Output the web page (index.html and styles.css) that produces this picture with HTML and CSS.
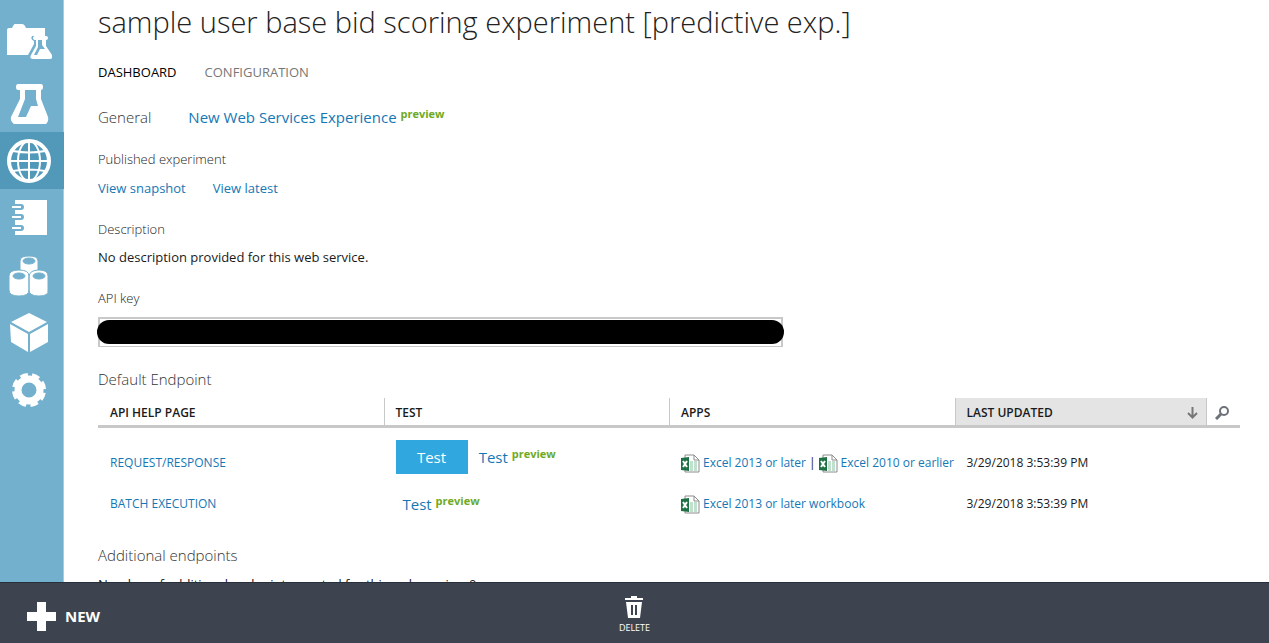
FILE: index.html
```
<!DOCTYPE html>
<html lang="en">
<head>
    <meta charset="UTF-8">
    <meta name="viewport" content="width=device-width, initial-scale=1.0">
    <title>Web Service Dashboard</title>
    <link rel="stylesheet" href="styles.css">
</head>
<body>

<!-- Excel icon, reused in the apps column -->
<svg class="symbols" aria-hidden="true">
    <symbol id="excel" viewBox="0 0 19 19">
        <path d="M4 1h9l5 5v12H4z" fill="#fff" stroke="#8c8c8c"/>
        <path d="M13 1v5h5" fill="none" stroke="#8c8c8c"/>
        <path d="M9 8h3M13 8h3M9 10h3M13 10h3M9 12h3M13 12h3M9 14h3M13 14h3M9 16h3M13 16h3" stroke="#7fc29b"/>
        <path d="M0 4l8-1v14l-8-1z" fill="#1e7145"/>
        <path d="M2 7l4 6M6 7l-4 6" stroke="#fff" stroke-width="2"/>
    </symbol>
</svg>

<div class="workspace">
    <nav class="sidebar">
        <a href="#projects" class="nav-item" aria-label="Projects">
            <svg class="nav-icon" viewBox="0 0 46 46" fill="#fff">
                <path d="M1 6q0-2 2-2h3l1-2q1-2 2-2h7q2 0 3 2l1 2h19v8H26q-2 3 2 5v3l-6 11H1z"/>
                <path d="M29 12h11q2 0 2 2t-2 2v6l6 9q1 4-2 4H27q-4 0-2-4l5-9v-6q-3 0-3-2t2-2z"/>
                <path d="M32 16h4v5l3 4h-5l-3 6h-3l4-8z" fill="#73b0ce"/>
            </svg>
        </a>
        <a href="#experiments" class="nav-item" aria-label="Experiments">
            <svg class="nav-icon" viewBox="0 0 46 46" fill="#fff">
                <path d="M12 3h23q2 0 2 3t-2 3v9l7 18q1 4-2 7H8q-4-3-3-7l9-18V9h-2q-2 0-2-3t2-3z"/>
                <path d="M19 9h11v9l2 7h-7l-5 11h-8l7-18z" fill="#73b0ce"/>
            </svg>
        </a>
        <a href="#services" class="nav-item active" aria-label="Web services">
            <svg class="nav-icon" viewBox="0 0 46 46" fill="none" stroke="#fff" stroke-width="2">
                <circle cx="23" cy="23" r="20" stroke-width="4"/>
                <ellipse cx="23" cy="23" rx="11" ry="20"/>
                <path d="M23 3v40M3 23h40M7 13q16 3 32 0M7 33q16-3 32 0"/>
            </svg>
        </a>
        <a href="#notebooks" class="nav-item" aria-label="Notebooks">
            <svg class="nav-icon" viewBox="0 0 46 46">
                <path d="M9 5h32v35H9z" fill="#fff"/>
                <path d="M8 9h7q3 0 3 3t-3 3H8zM8 19h7q3 0 3 3t-3 3H8zM8 30h7q3 0 3 3t-3 3H8z" fill="#73b0ce"/>
                <path d="M6 12h9M6 22h9M6 33h9" stroke="#fff" stroke-width="2"/>
            </svg>
        </a>
        <a href="#datasets" class="nav-item" aria-label="Datasets">
            <svg class="nav-icon" viewBox="0 0 46 46" fill="#fff" stroke="#73b0ce">
                <path d="M14 9v14h18V9q0-5-9-5t-9 5z"/>
                <ellipse cx="23" cy="9" rx="6" ry="3" fill="#73b0ce"/>
                <path d="M3 24v14q0 6 10 6t10-6V24q0-6-10-6T3 24zM23 24v14q0 6 10 6t9-6V24q0-6-9-6t-10 6z"/>
                <ellipse cx="13" cy="24" rx="6" ry="3" fill="#73b0ce"/>
                <ellipse cx="33" cy="24" rx="6" ry="3" fill="#73b0ce"/>
            </svg>
        </a>
        <a href="#models" class="nav-item" aria-label="Trained models">
            <svg class="nav-icon" viewBox="0 0 46 46" fill="#fff">
                <path d="M23 4l18 9-18 10L5 13z"/>
                <path d="M4 15l18 10v18L5 33zM42 15L24 25v18l18-10z"/>
            </svg>
        </a>
        <a href="#settings" class="nav-item" aria-label="Settings">
            <svg class="nav-icon" viewBox="0 0 46 46">
                <circle cx="23" cy="24" r="14" fill="none" stroke="#fff" stroke-width="6" stroke-dasharray="7 4" transform="rotate(10 23 24)"/>
                <circle cx="23" cy="24" r="11" fill="none" stroke="#fff" stroke-width="7"/>
            </svg>
        </a>
    </nav>

    <main class="content">
        <h1>sample user base bid scoring experiment [predictive exp.]</h1>

        <div class="tabs">
            <a href="#dashboard" class="tab selected">DASHBOARD</a>
            <a href="#configuration" class="tab">CONFIGURATION</a>
        </div>

        <div class="general">
            <h2>General</h2>
            <a href="#preview" class="large-link">New Web Services Experience <span class="preview">preview</span></a>
        </div>

        <h3>Published experiment</h3>
        <div class="links">
            <a href="#snapshot">View snapshot</a>
            <a href="#latest">View latest</a>
        </div>

        <h3>Description</h3>
        <p class="text">No description provided for this web service.</p>

        <h3><label for="apiKey">API key</label></h3>
        <div class="key-box">
            <input type="text" id="apiKey" class="key-input" readonly>
            <span class="key-mask"></span>
        </div>

        <h2>Default Endpoint</h2>
        <table class="endpoints">
            <thead>
                <tr>
                    <th>API HELP PAGE</th>
                    <th>TEST</th>
                    <th>APPS</th>
                    <th class="sorted">
                        <div class="sort-head">
                            LAST UPDATED
                            <svg width="11" height="12" viewBox="0 0 11 12" fill="none" stroke="#777" stroke-width="2"><path d="M5.500 0v10M1 6l4.500 4.500L10 6"/></svg>
                        </div>
                    </th>
                    <th class="search-head">
                        <button type="button" class="search-btn" aria-label="Search">
                            <svg width="15" height="14" viewBox="0 0 15 14" fill="none" stroke="#6d7278"><circle cx="9" cy="5" r="4" stroke-width="2"/><path d="M6 8l-5 5" stroke-width="3"/></svg>
                        </button>
                    </th>
                </tr>
            </thead>
            <tbody>
                <tr class="first-row">
                    <td><a href="#rrs">REQUEST/RESPONSE</a></td>
                    <td class="test-cell">
                        <button type="button" class="test-btn">Test</button>
                        <a href="#test" class="large-link">Test <span class="preview">preview</span></a>
                    </td>
                    <td>
                        <div class="apps">
                            <svg class="excel"><use href="#excel"/></svg>
                            <a href="#excel2013">Excel 2013 or later</a>
                            <span>|</span>
                            <svg class="excel"><use href="#excel"/></svg>
                            <a href="#excel2010">Excel 2010 or earlier</a>
                        </div>
                    </td>
                    <td colspan="2">3/29/2018 3:53:39 PM</td>
                </tr>
                <tr>
                    <td><a href="#bes">BATCH EXECUTION</a></td>
                    <td class="batch-test"><a href="#batchtest" class="large-link">Test <span class="preview">preview</span></a></td>
                    <td>
                        <div class="apps">
                            <svg class="excel"><use href="#excel"/></svg>
                            <a href="#workbook">Excel 2013 or later workbook</a>
                        </div>
                    </td>
                    <td colspan="2">3/29/2018 3:53:39 PM</td>
                </tr>
            </tbody>
        </table>

        <h2>Additional endpoints</h2>
        <p class="text">Number of additional endpoints created for this web service: 0</p>
    </main>
</div>

<footer class="command-bar">
    <button type="button" class="new-btn">
        <svg width="29" height="29" viewBox="0 0 29 29" fill="#fff"><path d="M10 0h9v10h10v9H19v10h-9V19H0v-9h10z"/></svg>
        NEW
    </button>
    <button type="button" class="delete-btn">
        <svg width="20" height="23" viewBox="0 0 20 23"><path d="M7 0h6v2h6v2H1V2h6zM2 6h16l-2 16H4z" fill="#fff"/><path d="M8 9v10M12 9v10" stroke="#3d444f" stroke-width="2"/></svg>
        DELETE
    </button>
</footer>

</body>
</html>
```
FILE: styles.css
```
* {
    box-sizing: border-box;
}

body {
    display: flex;
    flex-direction: column;
    height: 100vh;
    margin: 0;
    overflow: hidden;
    font-family: 'Open Sans', 'Noto Sans', sans-serif;
    font-size: 13px;
    line-height: 20px;
    color: #1a1a1a;
    background-color: #fff;
}

a {
    color: #1577b5;
    text-decoration: none;
}

button {
    font-family: inherit;
    border: none;
    cursor: pointer;
}

.symbols {
    position: absolute;
    width: 0;
    height: 0;
}

.workspace {
    display: flex;
    flex: 1;
    min-height: 0;
}

/* Left navigation */
.sidebar {
    flex: none;
    width: 64px;
    padding-top: 18px;
    background-color: #73b0ce;
    border-right: 1px solid #a4cce0;
}

.nav-item {
    display: flex;
    align-items: center;
    height: 57px;
    padding-left: 6px;
}

.nav-item.active {
    margin-right: -1px;
    background-color: #5299b9;
}

.nav-icon {
    width: 46px;
    height: 46px;
}

/* Page content */
.content {
    flex: 1;
    min-width: 0;
    padding: 0 29px 0 34px;
    overflow: hidden;
}

h1, h2, h3, p {
    margin: 0;
    font-weight: 300;
}

h1 {
    font-size: 29px;
    line-height: 44px;
    color: #222;
}

h2 {
    font-size: 15px;
    line-height: 22px;
    color: #333;
}

h3 {
    font-size: 13px;
    color: #222;
}

.tabs {
    display: flex;
    gap: 28px;
    margin-top: 18px;
}

.tab {
    color: #777;
}

.tab.selected {
    color: #000;
}

.general {
    display: flex;
    gap: 37px;
    margin: 24px 0 21px;
}

.large-link {
    font-size: 15px;
    line-height: 22px;
}

.preview {
    font-size: 11px;
    font-weight: 700;
    line-height: 12px;
    vertical-align: 5px;
    color: #6eaa24;
}

.links {
    display: flex;
    gap: 27px;
    margin: 9px 0 21px;
}

.text {
    margin: 8px 0 21px;
    font-weight: 400;
}

.key-box {
    position: relative;
    width: 60%;
    margin: 9px 0 21px;
}

.key-input {
    display: block;
    width: 100%;
    height: 30px;
    border: 2px solid #c8c8c8;
    border-bottom-width: 1px;
}

.key-mask {
    position: absolute;
    inset: 3px -1px 3px -1px;
    border-radius: 12px;
    background-color: #000;
}

/* Endpoint table */
.endpoints {
    width: 100%;
    margin: 8px 0 18px;
    table-layout: fixed;
    border-collapse: separate;
    border-spacing: 0;
    font-size: 12px;
}

th {
    width: 25%;
    height: 30px;
    padding: 2px 12px 0;
    font-weight: 600;
    text-align: left;
    border-bottom: 3px solid #c8c8c8;
}

th + th {
    padding-left: 11px;
    border-left: 1px solid #c8c8c8;
}

th.sorted {
    width: 22%;
    padding-right: 8px;
    background-color: #e4e4e4;
}

th.search-head {
    width: 3%;
    padding: 2px 0 0;
}

.sort-head {
    display: flex;
    align-items: center;
    justify-content: space-between;
}

.search-btn {
    display: flex;
    align-items: center;
    padding: 0 8px;
    background: none;
}

td {
    padding: 10px 0 11px 12px;
    vertical-align: top;
    white-space: nowrap;
}

.first-row td {
    padding-top: 25px;
}

.first-row .test-cell {
    padding: 12px 0 10px 12px;
}

.test-btn {
    width: 72px;
    height: 34px;
    margin-right: 8px;
    font-size: 15px;
    color: #fff;
    background-color: #30a7df;
}

.batch-test {
    padding: 9px 0 10px 19px;
}

.apps {
    display: flex;
    align-items: center;
    gap: 3px;
}

.excel {
    flex: none;
    width: 19px;
    height: 19px;
}

/* Bottom command bar */
.command-bar {
    display: grid;
    grid-template-columns: 1fr auto 1fr;
    align-items: center;
    flex: none;
    height: 61px;
    padding: 0 27px;
    background-color: #3d444f;
    border-top: 1px solid #26303a;
}

.command-bar button {
    display: flex;
    align-items: center;
    padding: 0;
    color: #fff;
    background: none;
}

.command-bar .new-btn {
    gap: 9px;
    padding-top: 6px;
    font-size: 15px;
    font-weight: 700;
}

.command-bar .delete-btn {
    flex-direction: column;
    gap: 2px;
    padding-top: 3px;
    font-size: 9px;
}
```
